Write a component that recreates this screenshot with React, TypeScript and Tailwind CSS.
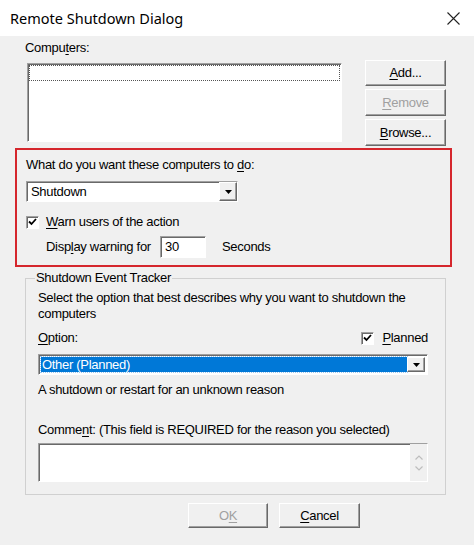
const font = { fontFamily: '"Liberation Sans", Arial, sans-serif' };

function U({ children }: { children: string }) {
  return <span className="underline underline-offset-2">{children}</span>;
}

function PushButton({ children, disabled = false, className = '' }: { children: React.ReactNode; disabled?: boolean; className?: string }) {
  return (
    <div
      className={`flex items-center justify-center border border-t-white border-l-white border-r-[#696969] border-b-[#696969] bg-[#f0f0f0] shadow-[inset_-1px_-1px_0_#a0a0a0] ${disabled ? 'text-[#a0a0a0]' : 'text-black'} ${className}`}
    >
      {children}
    </div>
  );
}

function DropArrow() {
  return (
    <div className="flex w-[18px] items-center justify-center border border-t-white border-l-white border-r-[#696969] border-b-[#696969] bg-[#f0f0f0] shadow-[inset_-1px_-1px_0_#a0a0a0]">
      <svg width="7" height="4" viewBox="0 0 7 4">
        <path d="M0 0h7L3.5 4z" fill="#000" />
      </svg>
    </div>
  );
}

function Check() {
  return (
    <div className="flex h-[13px] w-[13px] shrink-0 items-center justify-center border border-t-[#a0a0a0] border-l-[#a0a0a0] border-r-white border-b-white bg-white shadow-[inset_1px_1px_0_#696969]">
      <svg width="9" height="8" viewBox="0 0 9 8">
        <path d="M1 3.5l2.5 2.5L8 1" fill="none" stroke="#000" strokeWidth="1.8" />
      </svg>
    </div>
  );
}

const sunken = 'border border-t-[#a0a0a0] border-l-[#a0a0a0] border-r-white border-b-white shadow-[inset_1px_1px_0_#696969] bg-white';

export default function App() {
  return (
    <div className="flex h-[545px] w-[474px] flex-col overflow-hidden bg-[#f0f0f0] text-[13px] leading-[16px] tracking-[-0.3px] text-black" style={font}>
      <div className="flex h-[36px] shrink-0 items-center justify-between bg-white pl-[10px] pr-[14px]">
        <span className="text-[14.5px] tracking-normal" style={{ fontFamily: '"Noto Sans", sans-serif' }}>
          Remote Shutdown Dialog
        </span>
        <svg width="13" height="13" viewBox="0 0 13 13">
          <path d="M0.5 0.5l12 12M12.5 0.5l-12 12" stroke="#222" strokeWidth="1.1" />
        </svg>
      </div>

      <div className="flex flex-col pl-[15px]">
        <div className="flex pl-[10px] pt-[3px]">
          <div className="flex w-[317px] flex-col">
            <span className="leading-[18px]">
              Compu<U>t</U>ers:
            </span>
            <div className={`ml-[2px] mt-[6px] h-[79px] w-[315px] p-[1px] ${sunken}`}>
              <div className="h-[16px] border border-dotted border-[#555]" />
            </div>
          </div>
          <div className="ml-[23px] flex w-[81px] flex-col gap-[3px] pt-[21px]">
            <PushButton className="h-[26px]">
              <U>A</U>dd...
            </PushButton>
            <PushButton className="h-[27px]" disabled>
              <U>R</U>emove
            </PushButton>
            <PushButton className="h-[27px]">
              <U>B</U>rowse...
            </PushButton>
          </div>
        </div>

        <div className="mt-[2px] flex h-[119px] w-[437px] flex-col border-2 border-[#d5262c] pl-[9px] pt-[6px]">
          <span className="leading-[18px]">
            What do you want these computers to <U>d</U>o:
          </span>
          <div className={`mt-[7px] flex h-[21px] w-[212px] ${sunken}`}>
            <span className="flex-1 pl-[4px] leading-[19px]">Shutdown</span>
            <DropArrow />
          </div>
          <div className="mt-[12px] flex items-center gap-[7px]">
            <Check />
            <span>
              <U>W</U>arn users of the action
            </span>
          </div>
          <div className="mt-[6px] flex items-center pl-[20px]">
            <span className="w-[114px]">
              Disp<U>l</U>ay warning for
            </span>
            <div className={`flex h-[22px] w-[46px] items-center pl-[4px] ${sunken}`}>30</div>
            <span className="ml-[16px]">Seconds</span>
          </div>
        </div>

        <fieldset className="ml-[10px] mt-[3px] w-[421px] border border-[#d0d0d0] pb-[12px] pl-[12px] pr-[17px]">
          <legend className="-ml-[3px] px-[1px] leading-[16px]">Shutdown Event Tracker</legend>
          <p className="mt-[4px]">
            Select the option that best describes why you want to shutdown the
            <br />
            computers
          </p>
          <div className="mt-[8px] flex items-center justify-between">
            <span>
              <U>O</U>ption:
            </span>
            <div className="flex items-center gap-[8px]">
              <Check />
              <span>
                <U>P</U>lanned
              </span>
            </div>
          </div>
          <div className={`mt-[8px] flex h-[21px] w-[390px] p-[2px] ${sunken}`}>
            <span className="flex-1 bg-[#0078d7] pl-[1px] leading-[15px] text-white outline-1 outline-dotted outline-[#9cc8f0]">
              Other (Planned)
            </span>
            <DropArrow />
          </div>
          <p className="mt-[7px]">A shutdown or restart for an unknown reason</p>
          <p className="mt-[24px]">
            Comme<U>n</U>t: (This field is REQUIRED for the reason you selected)
          </p>
          <div className={`mt-[5px] flex h-[39px] w-[390px] justify-end ${sunken}`}>
            <div className="flex w-[17px] flex-col items-center justify-center gap-[6px] bg-[#f0f0f0]">
              <svg width="8" height="5" viewBox="0 0 8 5">
                <path d="M0.5 4.5L4 1l3.5 3.5" fill="none" stroke="#bdbdbd" strokeWidth="1.2" />
              </svg>
              <svg width="8" height="5" viewBox="0 0 8 5">
                <path d="M0.5 0.5L4 4l3.5-3.5" fill="none" stroke="#bdbdbd" strokeWidth="1.2" />
              </svg>
            </div>
          </div>
        </fieldset>

        <div className="mt-[8px] flex gap-[11px] pl-[173px]">
          <PushButton className="h-[25px] w-[80px]" disabled>
            O<U>K</U>
          </PushButton>
          <PushButton className="h-[25px] w-[81px]">
            <U>C</U>ancel
          </PushButton>
        </div>
      </div>
    </div>
  );
}
